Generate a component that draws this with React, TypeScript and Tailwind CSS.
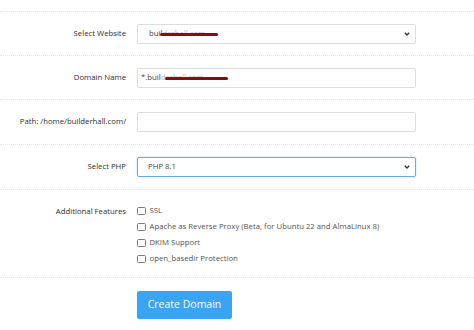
const features = [
  'SSL',
  'Apache as Reverse Proxy (Beta, for Ubuntu 22 and AlmaLinux 8)',
  'DKIM Support',
  'open_basedir Protection',
]

function Chevron() {
  return (
    <svg width="6" height="4" viewBox="0 0 6 4" className="text-[#333]">
      <path d="M0.8 0.8 L3 3 L5.2 0.8" fill="none" stroke="currentColor" strokeWidth="1.3" />
    </svg>
  )
}

function Redact({ className }: { className: string }) {
  return <span className={`absolute h-[3.5px] rounded-full bg-[#8e0b0b] ${className}`} />
}

function Row({ label, height, children }: { label: string; height: string; children: React.ReactNode }) {
  return (
    <div className={`flex items-center border-b border-dotted border-[#e6e6e6] ${height}`}>
      <div className="w-[126px] shrink-0 text-right text-[7.75px] text-[#2f2f2f]">{label}</div>
      <div className="ml-[11px] w-[279px]">{children}</div>
    </div>
  )
}

export default function App() {
  return (
    <div
      className="h-[330px] w-[474px] overflow-hidden bg-white pt-[11px]"
      style={{ fontFamily: '"Open Sans", "Liberation Sans", sans-serif' }}
    >
      <div className="border-t border-dotted border-[#e6e6e6]">
        <Row label="Select Website" height="h-[44px]">
          <div className="relative flex h-[20px] items-center justify-between rounded-[2px] border border-[#dedede] pl-[11px] pr-[5px] text-[7.75px] text-[#444]">
            <span className="text-[#bbb]">
              <span className="text-[#444]">buil</span>derhall.com
            </span>
            <Redact className="left-[22px] top-[8px] w-[58px]" />
            <Chevron />
          </div>
        </Row>

        <Row label="Domain Name" height="h-[44px]">
          <div className="relative flex h-[20px] items-center rounded-[2px] border border-[#dedede] pl-[3px] text-[7.75px] text-[#444]">
            <span>
              *.buil<span className="text-[#bbb]">derhall.com</span>
            </span>
            <Redact className="left-[27px] top-[8px] w-[63px]" />
          </div>
        </Row>

        <Row label="Path: /home/builderhall.com/" height="h-[45px]">
          <div className="h-[20px] rounded-[2px] border border-[#dedede]" />
        </Row>

        <Row label="Select PHP" height="h-[45px]">
          <div className="flex h-[20px] items-center justify-between rounded-[2px] border border-[#6ea7e4] pl-[10px] pr-[5px] text-[7.75px] text-[#444] shadow-[0_0_2px_rgba(90,150,220,0.45)]">
            <span>PHP 8.1</span>
            <Chevron />
          </div>
        </Row>

        <div className="flex border-b border-dotted border-[#e6e6e6] pb-[10px] pt-[13px]">
          <div className="w-[126px] shrink-0 text-right text-[7.75px] leading-[16px] text-[#2f2f2f]">
            Additional Features
          </div>
          <div className="ml-[11px] flex flex-col">
            {features.map((f) => (
              <label key={f} className="flex h-[16px] items-center gap-[4px] text-[7.75px] text-[#555]">
                <span className="h-[8.5px] w-[8.5px] rounded-[1.5px] border border-[#7a7a7a] bg-white" />
                {f}
              </label>
            ))}
          </div>
        </div>

        <div className="pl-[137px] pt-[12px]">
          <button
            type="button"
            className="h-[28px] w-[95px] rounded-[2px] bg-[#39a3f4] text-[10.5px] text-white"
          >
            Create Domain
          </button>
        </div>
      </div>
    </div>
  )
}
